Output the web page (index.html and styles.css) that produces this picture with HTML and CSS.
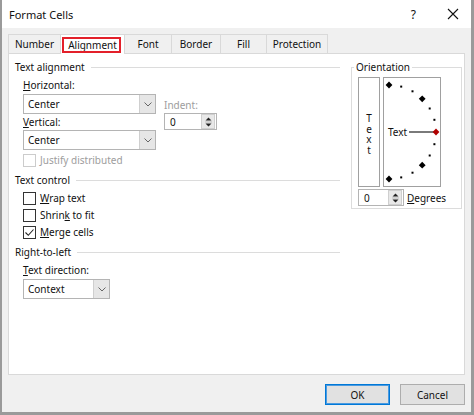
FILE: index.html
```html
<!DOCTYPE html>
<html>
<head>
<meta charset="utf-8">
<link rel="stylesheet" href="styles.css">
</head>
<body>
<div class="window">
  <div class="titlebar">
    <span class="title">Format Cells</span>
    <span class="help">?</span>
    <svg class="close" width="12" height="12" viewBox="0 0 12 12"><path d="M1 1 L11 11 M11 1 L1 11" stroke="#111" stroke-width="1.1" fill="none"/></svg>
  </div>
  <div class="content">
    <div class="tabs">
      <div class="tab w-number">Number</div>
      <div class="tab active w-align"><span class="mark"></span>Alignment</div>
      <div class="tab w-font">Font</div>
      <div class="tab w-border">Border</div>
      <div class="tab w-fill">Fill</div>
      <div class="tab w-prot">Protection</div>
    </div>
    <div class="panel">
      <div class="left">
        <div class="section"><span>Text alignment</span><i class="rule"></i></div>
        <div class="hv">
          <div class="hv-main">
            <div class="label"><u>H</u>orizontal:</div>
            <div class="combo wide c-h"><span class="val">Center</span><span class="drop"><svg width="8" height="5" viewBox="0 0 8 5"><path d="M0.5 0.5 L4 4 L7.5 0.5" stroke="#666" fill="none"/></svg></span></div>
            <div class="label"><u>V</u>ertical:</div>
            <div class="combo wide"><span class="val">Center</span><span class="drop"><svg width="8" height="5" viewBox="0 0 8 5"><path d="M0.5 0.5 L4 4 L7.5 0.5" stroke="#666" fill="none"/></svg></span></div>
          </div>
          <div class="hv-side">
            <div class="label disabled">Indent:</div>
            <div class="spin indent"><span class="val">0</span><span class="spinbtn"><svg width="7" height="12" viewBox="0 0 7 12"><path d="M0.5 4.5 L3.5 1.5 L6.5 4.5 Z M0.5 7.5 L3.5 10.5 L6.5 7.5 Z" fill="#222"/><path d="M-2 6 H9" stroke="#bbb"/></svg></span></div>
          </div>
        </div>
        <div class="check disabled m2"><span class="box"></span><span>Justify distributed</span></div>
        <div class="section m4"><span>Text control</span><i class="rule"></i></div>
        <div class="check m2"><span class="box"></span><span><u>W</u>rap text</span></div>
        <div class="check m1"><span class="box"></span><span>Shrin<u>k</u> to fit</span></div>
        <div class="check m1"><span class="box"><svg width="11" height="11" viewBox="0 0 11 11"><path d="M1.5 5.5 L4.3 8.3 L9.5 2.5" stroke="#222" stroke-width="1.1" fill="none"/></svg></span><span><u>M</u>erge cells</span></div>
        <div class="section m4"><span>Right-to-left</span><i class="rule"></i></div>
        <div class="label m2"><u>T</u>ext direction:</div>
        <div class="combo narrow m1"><span class="val">Context</span><span class="drop"><svg width="8" height="5" viewBox="0 0 8 5"><path d="M0.5 0.5 L4 4 L7.5 0.5" stroke="#666" fill="none"/></svg></span></div>
      </div>
      <fieldset class="orient">
        <legend>Orientation</legend>
        <div class="dials">
          <div class="vtext"><span class="vword">Text</span></div>
          <div class="dial">
            <svg width="56" height="108" viewBox="0 0 56 108">
              <line x1="25" y1="54" x2="50" y2="54" stroke="#7a7a7a" stroke-width="2"/>
              <text x="4" y="57.5" class="dialtext">Text</text>
              <g fill="#000">
                <rect x="2.6" y="4.6" width="4.8" height="4.8" transform="rotate(45 5 7)"/>
                <rect x="16.2" y="7.6" width="2" height="2"/>
                <rect x="27.5" y="12.3" width="2" height="2"/>
                <rect x="35.8" y="18.4" width="4.8" height="4.8" transform="rotate(45 38.2 20.8)"/>
                <rect x="44.7" y="29.5" width="2" height="2"/>
                <rect x="49.4" y="40.8" width="2" height="2"/>
                <rect x="49.4" y="65.2" width="2" height="2"/>
                <rect x="44.7" y="76.5" width="2" height="2"/>
                <rect x="35.8" y="84.8" width="4.8" height="4.8" transform="rotate(45 38.2 87.2)"/>
                <rect x="27.5" y="93.7" width="2" height="2"/>
                <rect x="16.2" y="98.4" width="2" height="2"/>
                <rect x="2.6" y="98.6" width="4.8" height="4.8" transform="rotate(45 5 101)"/>
              </g>
              <rect x="49.6" y="51.6" width="4.8" height="4.8" transform="rotate(45 52 54)" fill="#b00000"/>
            </svg>
          </div>
        </div>
        <div class="degrees">
          <div class="spin deg"><span class="val">0</span><span class="spinbtn"><svg width="7" height="12" viewBox="0 0 7 12"><path d="M0.5 4.5 L3.5 1.5 L6.5 4.5 Z M0.5 7.5 L3.5 10.5 L6.5 7.5 Z" fill="#222"/><path d="M-2 6 H9" stroke="#bbb"/></svg></span></div>
          <span class="deglabel"><u>D</u>egrees</span>
        </div>
      </fieldset>
    </div>
    <div class="buttons">
      <div class="btn default">OK</div>
      <div class="btn">Cancel</div>
    </div>
  </div>
</div>
</body>
</html>
```

FILE: styles.css
```css
* { box-sizing: border-box; }
html, body { margin: 0; padding: 0; }
body {
  width: 474px;
  height: 415px;
  overflow: hidden;
  font-family: "Noto Sans", "Open Sans", sans-serif;
  font-size: 10px;
  color: #111;
  background: #f0f0f0;
}
.window {
  width: 474px;
  height: 415px;
  border-left: 2px solid #9a9a9a;
  border-right: 3px solid #9a9a9a;
  border-bottom: 3px solid #9a9a9a;
  background: #f0f0f0;
  display: flex;
  flex-direction: column;
}
.titlebar {
  height: 28px;
  background: #fff;
  display: flex;
  align-items: center;
  padding-left: 7px;
}
.title { font-size: 11px; flex: 1; }
.help { font-size: 12px; margin-right: 31px; }
.close { margin-right: 12px; }
.content {
  padding: 6px 4px 0 6px;
}
.tabs {
  display: flex;
  height: 19px;
}
.tab {
  height: 19px;
  border: 1px solid #d9d9d9;
  border-bottom: none;
  margin-right: -1px;
  display: flex;
  align-items: center;
  justify-content: center;
  background: #f0f0f0;
  position: relative;
}
.tab.active {
  background: #fff;
  height: 20px;
  margin-bottom: -1px;
  z-index: 1;
}
.mark {
  position: absolute;
  left: 1px;
  right: 3px;
  top: 2px;
  bottom: 1px;
  border: 2px solid #e3202a;
}
.w-number { width: 53px; }
.w-align { width: 65px; }
.w-font { width: 48px; }
.w-border { width: 50px; }
.w-fill { width: 47px; }
.w-prot { width: 62px; }
.panel {
  width: 457px;
  height: 322px;
  background: #fff;
  border: 1px solid #d9d9d9;
  display: flex;
  align-items: flex-start;
  padding: 5px 0 0 6px;
}
.left { width: 325px; }
.section {
  display: flex;
  align-items: center;
  height: 16px;
}
.rule {
  flex: 1;
  height: 1px;
  background: #dcdcdc;
  margin-left: 6px;
}
.label {
  height: 16px;
  line-height: 16px;
  margin-left: 8px;
}
.m1 { margin-top: 1px; }
.m2 { margin-top: 2px; }
.m4 { margin-top: 4px; }
.hv { display: flex; margin-top: 2px; }
.hv-main { width: 141px; }
.hv-side { padding-top: 20px; margin-left: 8px; }
.combo.c-h { margin-top: 1px; }
.disabled { color: #9d9d9d; }
.combo {
  margin-left: 8px;
  height: 20px;
  border: 1px solid #b4b4b4;
  background: #fff;
  display: flex;
  align-items: center;
}
.combo.wide { width: 133px; }
.combo.narrow { width: 87px; }
.combo .val { flex: 1; padding-left: 4px; }
.drop {
  width: 16px;
  height: 18px;
  background: #e6e6e6;
  border-left: 1px solid #cfcfcf;
  display: flex;
  align-items: center;
  justify-content: center;
}
.spin {
  height: 17px;
  border: 1px solid #b4b4b4;
  background: #fff;
  display: flex;
  align-items: center;
}
.spin.indent { width: 53px; }
.hv-side .label { margin-left: 0; }
.spin .val { flex: 1; padding-left: 5px; }
.spinbtn {
  width: 14px;
  height: 15px;
  margin-right: 1px;
  background: #e8e8e8;
  border: 1px solid #cfcfcf;
  display: flex;
  align-items: center;
  justify-content: center;
  overflow: hidden;
}
.check {
  display: flex;
  align-items: center;
  height: 16px;
  margin-left: 8px;
}
.box {
  width: 13px;
  height: 13px;
  border: 1px solid #333;
  background: #fff;
  margin-right: 4px;
  display: flex;
  align-items: center;
  justify-content: center;
}
.check.disabled .box { border-color: #cccccc; }
.orient {
  margin: 0 0 0 11px;
  width: 111px;
  border: 1px solid #dcdcdc;
  padding: 2px 0 2px 6px;
}
.orient legend {
  padding: 0 2px;
  margin-left: -4px;
  line-height: 16px;
}
.dials {
  display: flex;
  gap: 3px;
}
.vtext {
  width: 22px;
  height: 110px;
  border: 1px solid #a0a0a0;
  display: flex;
  align-items: center;
  justify-content: center;
}
.vword {
  writing-mode: vertical-lr;
  text-orientation: upright;
  line-height: 12px;
  letter-spacing: -3.5px;
}
.dial {
  width: 58px;
  height: 110px;
  border: 1px solid #a0a0a0;
}
.dial svg { display: block; }
.dialtext { font-family: "Noto Sans", "Open Sans", sans-serif; font-size: 10px; fill: #111; }
.degrees {
  display: flex;
  align-items: center;
  margin-top: 2px;
}
.spin.deg { width: 46px; }
.deglabel { margin-left: 3px; }
.buttons {
  display: flex;
  justify-content: flex-end;
  gap: 10px;
  margin-top: 9px;
  width: 457px;
}
.btn {
  width: 65px;
  height: 21px;
  border: 1px solid #adadad;
  background: #e1e1e1;
  display: flex;
  align-items: center;
  justify-content: center;
}
.btn.default {
  border-color: #0078d7;
  box-shadow: inset 0 0 0 1px #4a9ae0;
}
```
